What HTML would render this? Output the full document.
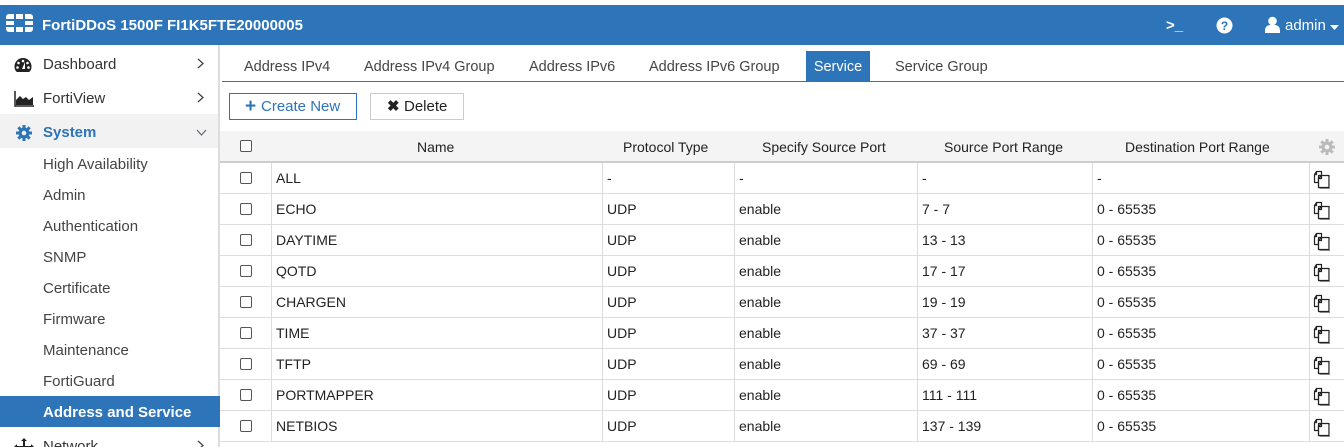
<!DOCTYPE html>
<html><head><meta charset="utf-8">
<style>
*{margin:0;padding:0;box-sizing:border-box}
html,body{width:1344px;height:447px;overflow:hidden}
body{background:#fff;font-family:"Liberation Sans",sans-serif;color:#333;position:relative;font-size:14px}
.a{position:absolute}
#top{left:0;top:5px;width:1344px;height:40px;background:#2d74b8;color:#fff}
.side{left:0;top:45px;width:220px;height:402px;border-right:2px solid #ddd}
.si{position:absolute;left:0;width:218px;height:34px;line-height:38px;font-size:15px;color:#333}
.si .ic{position:absolute;left:14px;top:11px}
.si .t{position:absolute;left:43px}
.si .ch{position:absolute;left:197px;top:12px}
.sub{position:absolute;left:43px;font-size:15px;color:#444;height:31px;line-height:34px}
.tab{position:absolute;top:51px;height:30px;line-height:32px;font-size:14.5px;color:#444;padding:0 11px}
.cb{position:absolute;width:12px;height:12px;border:1px solid #555;border-radius:2px;background:#fff}
.row{position:absolute;left:220px;width:1124px;height:31px;border-bottom:1px solid #ddd;font-size:14px;line-height:31px;color:#222}
.row span{position:absolute;top:0}
.vl{position:absolute;top:0;width:1px;height:31px;background:#ddd}
</style></head><body>
<div class="a" id="top">
  <svg class="a" style="left:6px;top:9px" width="27" height="18" viewBox="0 0 27 18">
    <path d="M3 0h5v5H0V3a3 3 0 0 1 3-3z M10 0h7v5h-7z M19 0h5a3 3 0 0 1 3 3v2h-8z M0 7h8v4H0z M19 7h8v4h-8z M0 13h8v5H3a3 3 0 0 1-3-3z M10 13h7v5h-7z M19 13h8v2a3 3 0 0 1-3 3h-5z" fill="#fff"/>
  </svg>
  <div class="a" style="left:42px;top:1px;line-height:40px;font-size:15px;font-weight:bold">FortiDDoS 1500F FI1K5FTE20000005</div>
  <div class="a" style="left:1166px;top:1px;line-height:40px;font-size:15px;font-weight:bold">&gt;_</div>
  <svg class="a" style="left:1216px;top:12px" width="17" height="17" viewBox="0 0 17 17"><circle cx="8.5" cy="8.5" r="8" fill="#fff"/><text x="8.5" y="13" text-anchor="middle" font-size="12" font-weight="bold" fill="#2d74b8" font-family="Liberation Sans">?</text></svg>
  <svg class="a" style="left:1265px;top:11px" width="15" height="17" viewBox="0 0 15 17"><circle cx="7.5" cy="5" r="4.3" fill="#fff"/><path d="M0 17v-3a5 5 0 0 1 5-5h5a5 5 0 0 1 5 5v3z" fill="#fff"/></svg>
  <div class="a" style="left:1285px;top:1px;line-height:40px;font-size:15px">admin</div>
  <svg class="a" style="left:1330px;top:20px" width="9" height="5"><path d="M0 0h9L4.5 5z" fill="#fff"/></svg>
</div>

<div class="a side">
  <div class="si" style="top:1px"><svg class="ic" width="18" height="16" viewBox="0 0 18 16"><path d="M9 1a8.5 8.5 0 0 0-8.5 8.5c0 2.5 1 4.5 2.5 5.5h12c1.5-1 2.5-3 2.5-5.5A8.5 8.5 0 0 0 9 1z" fill="#222"/><circle cx="9" cy="4" r="1.3" fill="#fff"/><circle cx="4.5" cy="6" r="1.3" fill="#fff"/><circle cx="13.5" cy="6" r="1.3" fill="#fff"/><circle cx="3.5" cy="10.5" r="1.3" fill="#fff"/><circle cx="14.5" cy="10.5" r="1.3" fill="#fff"/><path d="M8 12l3-7 0 7z" fill="#fff"/></svg><span class="t">Dashboard</span><svg class="ch" width="7" height="11"><path d="M1 1l5 4.5L1 10" stroke="#444" stroke-width="1.3" fill="none"/></svg></div>
  <div class="si" style="top:35px"><svg class="ic" width="20" height="16" viewBox="0 0 20 16"><path d="M1 0v15h19" stroke="#222" stroke-width="1.5" fill="none"/><path d="M2 14V9l4-4 3 3 3-2 3 3 4-3v8z" fill="#222"/></svg><span class="t">FortiView</span><svg class="ch" width="7" height="11"><path d="M1 1l5 4.5L1 10" stroke="#444" stroke-width="1.3" fill="none"/></svg></div>
  <div class="si" style="top:69px;background:#f2f2f2;color:#2d74b8;font-weight:bold"><svg class="ic" style="left:16px" width="16" height="16" viewBox="0 0 16 16"><circle cx="8" cy="8" r="5.5" fill="#2d74b8"/><g stroke="#2d74b8" stroke-width="3"><path d="M8 0v16M0 8h16M2.3 2.3l11.4 11.4M13.7 2.3L2.3 13.7"/></g><circle cx="8" cy="8" r="2.3" fill="#f2f2f2"/></svg><span class="t">System</span><svg class="ch" style="left:196px;top:15px" width="11" height="7"><path d="M1 1l4.5 5L10 1" stroke="#667" stroke-width="1.2" fill="none"/></svg></div>
  <div class="sub" style="top:103px">High Availability</div>
  <div class="sub" style="top:134px">Admin</div>
  <div class="sub" style="top:165px">Authentication</div>
  <div class="sub" style="top:196px">SNMP</div>
  <div class="sub" style="top:227px">Certificate</div>
  <div class="sub" style="top:258px">Firmware</div>
  <div class="sub" style="top:289px">Maintenance</div>
  <div class="sub" style="top:320px">FortiGuard</div>
  <div class="a" style="left:0;top:351px;width:220px;height:31px;background:#2d74b8"></div>
  <div class="sub" style="top:351px;color:#fff;font-weight:bold">Address and Service</div>
  <div class="si" style="top:383px"><svg class="ic" style="top:10px" width="20" height="14" viewBox="0 0 20 14"><path d="M10 0l3 3h-2v5h6V6l3 3-3 3v-2H3v2L0 9l3-3v2h6V3H7z" fill="#222"/></svg><span class="t">Network</span><svg class="ch" width="7" height="11"><path d="M1 1l5 4.5L1 10" stroke="#444" stroke-width="1.3" fill="none"/></svg></div>
</div>

<div class="tab" style="left:233px">Address IPv4</div>
<div class="tab" style="left:353px">Address IPv4 Group</div>
<div class="tab" style="left:518px">Address IPv6</div>
<div class="tab" style="left:638px">Address IPv6 Group</div>
<div class="tab" style="left:806px;width:64px;padding:0;text-align:center;background:#2d74b8;color:#fff">Service</div>
<div class="tab" style="left:884px">Service Group</div>
<div class="a" style="left:222px;top:81px;width:1122px;height:1px;background:#2d74b8"></div>

<div class="a" style="left:229px;top:93px;width:128px;height:27px;border:1px solid #2d74b8;color:#2d74b8;font-size:15px;line-height:26px"><span style="position:absolute;left:15px;top:0;font-weight:bold;font-size:19px">+</span><span style="position:absolute;left:31px">Create New</span></div>
<div class="a" style="left:370px;top:93px;width:94px;height:27px;border:1px solid #ccc;color:#222;font-size:15px;line-height:26px"><span style="position:absolute;left:16px;font-weight:bold">✖</span><span style="position:absolute;left:33px">Delete</span></div>

<div class="a" style="left:220px;top:131px;width:1124px;height:32px;background:#f4f4f4;border-bottom:2px solid #ccc;font-size:14px;line-height:33px;color:#222">
  <div class="cb" style="left:20px;top:9px"></div>
  <span class="a" style="left:197px">Name</span>
  <span class="a" style="left:403px">Protocol Type</span>
  <span class="a" style="left:542px">Specify Source Port</span>
  <span class="a" style="left:724px">Source Port Range</span>
  <span class="a" style="left:905px">Destination Port Range</span>
  <svg class="a" style="left:1099px;top:8px" width="16" height="16" viewBox="0 0 16 16"><circle cx="8" cy="8" r="5.5" fill="#bbb"/><g stroke="#bbb" stroke-width="3"><path d="M8 0v16M0 8h16M2.3 2.3l11.4 11.4M13.7 2.3L2.3 13.7"/></g><circle cx="8" cy="8" r="2.3" fill="#f4f4f4"/></svg>
</div>

<div id="rows"></div>
<script>
var d=[["ALL","-","-","-","-"],["ECHO","UDP","enable","7 - 7","0 - 65535"],["DAYTIME","UDP","enable","13 - 13","0 - 65535"],["QOTD","UDP","enable","17 - 17","0 - 65535"],["CHARGEN","UDP","enable","19 - 19","0 - 65535"],["TIME","UDP","enable","37 - 37","0 - 65535"],["TFTP","UDP","enable","69 - 69","0 - 65535"],["PORTMAPPER","UDP","enable","111 - 111","0 - 65535"],["NETBIOS","UDP","enable","137 - 139","0 - 65535"]];
var h="";
var ic='<svg style="position:absolute;left:1093px;top:7px" width="19" height="19" viewBox="0 0 19 19"><path d="M3.5 1.5h5v4h-3v7h-4v-8z" fill="#fff" stroke="#222" stroke-width="1.2" stroke-linejoin="round"/><path d="M3.5 1.5v3h-2" fill="none" stroke="#222" stroke-width="1.2"/><path d="M8.5 5.5h7.5v12h-10.5v-9z" fill="#fff" stroke="#222" stroke-width="1.3" stroke-linejoin="round"/><path d="M8.5 5.5v3h-3" fill="none" stroke="#222" stroke-width="1.2"/><path d="M16.5 7v11.5h-10" fill="none" stroke="#888" stroke-width="1"/></svg>';
for(var i=0;i<d.length;i++){var r=d[i],t=163+i*31;
h+='<div class="row" style="top:'+t+'px"><div class="cb" style="left:20px;top:9px"></div>'+
'<div class="vl" style="left:51px"></div><div class="vl" style="left:382px"></div><div class="vl" style="left:514px"></div><div class="vl" style="left:697px"></div><div class="vl" style="left:872px"></div><div class="vl" style="left:1089px"></div>'+
'<span style="left:56px">'+r[0]+'</span><span style="left:387px">'+r[1]+'</span><span style="left:519px">'+r[2]+'</span><span style="left:702px">'+r[3]+'</span><span style="left:877px">'+r[4]+'</span>'+ic+'</div>';}
document.getElementById("rows").innerHTML=h;
</script>
</body></html>
